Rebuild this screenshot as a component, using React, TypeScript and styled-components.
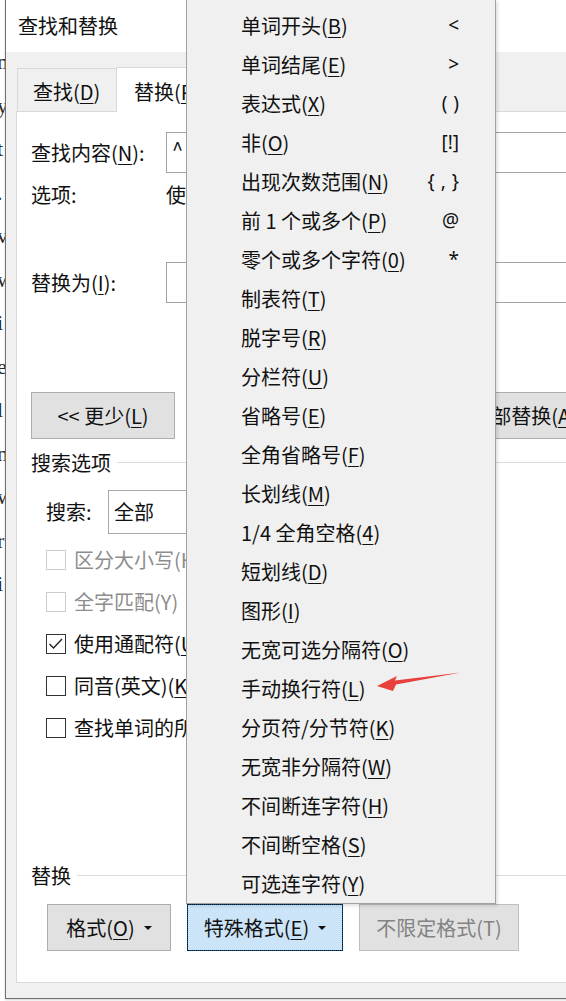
import styled, { createGlobalStyle } from 'styled-components';

const GlobalStyle = createGlobalStyle`
  * { box-sizing: border-box; }
  html, body { margin: 0; padding: 0; background: #fff; }
`

const Screen = styled.div`
  position: relative;
  width: 566px;
  height: 1001px;
  overflow: hidden;
  display: flex;
  background: #fff;
  font-family: "Noto Sans CJK SC", "Noto Sans", sans-serif;
  font-size: 20px;
  color: #111;
`

// 뒤에 깔린 문서 조각
const DocStrip = styled.div`
  width: 5px;
  flex-shrink: 0;
  overflow: hidden;
  padding-top: 40px;
  font-family: "Liberation Serif", serif;
  font-size: 22px;
  line-height: 43.5px;
  color: #2a2a2a;
  white-space: nowrap;
`

const DocLine = styled.div`
  margin-left: -3px;
`

const Dialog = styled.div`
  width: 930px;
  height: 999px;
  flex-shrink: 0;
  border-left: 1px solid #707070;
  border-bottom: 1px solid #707070;
  background: #f0f0f0;
  display: flex;
  flex-direction: column;
  box-shadow: 0 1px 2px rgba(0, 0, 0, 0.18);
`

const TitleBar = styled.div`
  height: 52px;
  flex-shrink: 0;
  background: #fff;
  padding-left: 12px;
  display: flex;
  align-items: center;
  line-height: 1;
`

const TabRow = styled.div`
  height: 59px;
  flex-shrink: 0;
  padding: 15px 0 0 11px;
  display: flex;
  align-items: flex-end;
  position: relative;
  z-index: 1;
`

const Tab = styled.div<{ $active?: boolean }>`
  height: ${p => (p.$active ? '45px' : '43px')};
  margin-bottom: ${p => (p.$active ? '-1px' : '0')};
  margin-left: ${p => (p.$active ? '-1px' : '0')};
  width: ${p => (p.$active ? '106px' : '100px')};
  padding: 4px 0 0 ${p => (p.$active ? '17px' : '15px')};
  display: flex;
  align-items: center;
  background: ${p => (p.$active ? '#fff' : '#f0f0f0')};
  border: 1px solid #d9d9d9;
  border-bottom: none;
  line-height: 1;
`

const Panel = styled.div`
  flex: 1;
  margin: 0 10px 15px 10px;
  background: #fff;
  border: 1px solid #d9d9d9;
  display: flex;
  flex-direction: column;
  padding-left: 14px;
  line-height: 1;
`

const FieldRow = styled.div<{ $mt: number; $h: number }>`
  margin-top: ${p => p.$mt}px;
  height: ${p => p.$h}px;
  display: grid;
  grid-template-columns: 135px 1fr;
  align-items: center;
  padding-right: 20px;
`

const TextBox = styled.div`
  height: 41px;
  border: 1px solid #a3a3a3;
  padding: 6px 5px 0;
`

const Mn = styled.span`
  text-decoration: underline;
  text-underline-offset: 3px;
  text-decoration-thickness: 1px;
`

const ButtonRow = styled.div<{ $mt: number; $pl: number; $gap: number }>`
  margin-top: ${p => p.$mt}px;
  padding-left: ${p => p.$pl}px;
  height: 47px;
  display: flex;
  gap: ${p => p.$gap}px;
`

const ActionGroup = styled.div`
  margin-left: 119px;
  display: flex;
  gap: 14px;
`

const Button = styled.div<{ $w: number; $focus?: boolean; $disabled?: boolean }>`
  width: ${p => p.$w}px;
  height: 47px;
  flex-shrink: 0;
  display: flex;
  align-items: center;
  justify-content: center;
  gap: 9px;
  white-space: nowrap;
  background: ${p => (p.$focus ? '#cce4f7' : '#e1e1e1')};
  border: 1px solid ${p => (p.$focus ? '#005499' : p.$disabled ? '#bfbfbf' : '#adadad')};
  outline: ${p => (p.$focus ? '1px dotted #111' : 'none')};
  outline-offset: -1px;
  color: ${p => (p.$disabled ? '#838383' : '#111')};
`

const Caret = styled.span`
  width: 0;
  height: 0;
  border-left: 4px solid transparent;
  border-right: 4px solid transparent;
  border-top: 4px solid #111;
`

const GroupHeader = styled.div<{ $mt: number }>`
  margin-top: ${p => p.$mt}px;
  height: 28px;
  display: flex;
  align-items: center;
  gap: 6px;
  &::after {
    content: '';
    flex: 1;
    height: 1px;
    margin-top: -1px;
    background: #dcdcdc;
  }
`

const SearchRow = styled.div`
  margin-top: 13px;
  height: 44px;
  padding-left: 15px;
  display: flex;
  align-items: center;
`

const SearchLabel = styled.span`
  width: 62px;
`

const Select = styled.div`
  width: 180px;
  height: 44px;
  border: 1px solid #a9a9a9;
  padding-left: 5px;
  display: flex;
  align-items: center;
`

const CheckList = styled.div`
  margin-top: 5px;
  padding-left: 15px;
  display: flex;
  flex-direction: column;
`

const CheckRow = styled.div<{ $disabled?: boolean }>`
  height: 42px;
  display: flex;
  align-items: center;
  gap: 8px;
  white-space: nowrap;
  color: ${p => (p.$disabled ? '#8d8d8d' : '#111')};
`

const Box = styled.span<{ $disabled?: boolean }>`
  width: 20px;
  height: 20px;
  flex-shrink: 0;
  border: 1px solid ${p => (p.$disabled ? '#cccccc' : '#333')};
  background: #fff;
  display: flex;
`

const Menu = styled.div`
  position: absolute;
  left: 186px;
  top: -1px;
  width: 310px;
  padding-top: 6px;
  background: #f0f0f0;
  border: 1px solid #a0a0a0;
  box-shadow: 2px 2px 3px rgba(0, 0, 0, 0.12);
  z-index: 5;
  line-height: 1;
`

const MenuItem = styled.div`
  height: 39px;
  padding: 0 36px 0 54px;
  display: flex;
  align-items: center;
  justify-content: space-between;
  white-space: nowrap;
`

const Shortcut = styled.span`
  font-family: "Noto Sans", sans-serif;
  font-size: 19px;
  word-spacing: 1px;
`

const Arrow = styled.svg`
  position: absolute;
  left: 370px;
  top: 665px;
  z-index: 6;
`

const docLetters = ['m', 'y', 't', '.', 'v', 'w', 'i', 'e', 'l', 'n', 'w', 'r', 'i']

const menuItems: [string, string, string, string][] = [
  ['单词开头(', 'B', ')', '<'],
  ['单词结尾(', 'E', ')', '>'],
  ['表达式(', 'X', ')', '( )'],
  ['非(', 'O', ')', '[!]'],
  ['出现次数范围(', 'N', ')', '{ , }'],
  ['前 1 个或多个(', 'P', ')', '@'],
  ['零个或多个字符(', '0', ')', '*'],
  ['制表符(', 'T', ')', ''],
  ['脱字号(', 'R', ')', ''],
  ['分栏符(', 'U', ')', ''],
  ['省略号(', 'E', ')', ''],
  ['全角省略号(', 'F', ')', ''],
  ['长划线(', 'M', ')', ''],
  ['1/4 全角空格(', '4', ')', ''],
  ['短划线(', 'D', ')', ''],
  ['图形(', 'I', ')', ''],
  ['无宽可选分隔符(', 'O', ')', ''],
  ['手动换行符(', 'L', ')', ''],
  ['分页符/分节符(', 'K', ')', ''],
  ['无宽非分隔符(', 'W', ')', ''],
  ['不间断连字符(', 'H', ')', ''],
  ['不间断空格(', 'S', ')', ''],
  ['可选连字符(', 'Y', ')', ''],
]

function Check({ label, disabled, checked }: { label: React.ReactNode; disabled?: boolean; checked?: boolean }) {
  return (
    <CheckRow $disabled={disabled}>
      <Box $disabled={disabled}>
        {checked && (
          <svg width="18" height="18" viewBox="0 0 18 18">
            <polyline points="2.5,9 6.5,13 15,4" fill="none" stroke="#222" strokeWidth="1.4" />
          </svg>
        )}
      </Box>
      <span>{label}</span>
    </CheckRow>
  )
}

export default function App() {
  return (
    <>
      <GlobalStyle />
      <Screen>
        <DocStrip>
          {docLetters.map((l, i) => <DocLine key={i}>{l}</DocLine>)}
        </DocStrip>

        <Dialog>
          <TitleBar>查找和替换</TitleBar>

          <TabRow>
            <Tab><span>查找(<Mn>D</Mn>)</span></Tab>
            <Tab $active><span>替换(<Mn>P</Mn>)</span></Tab>
          </TabRow>

          <Panel>
            <FieldRow $mt={20} $h={41}>
              <span>查找内容(<Mn>N</Mn>):</span>
              <TextBox>^</TextBox>
            </FieldRow>
            <FieldRow $mt={8} $h={28}>
              <span>选项:</span>
              <span>使用通配符</span>
            </FieldRow>
            <FieldRow $mt={53} $h={41}>
              <span>替换为(<Mn>I</Mn>):</span>
              <TextBox />
            </FieldRow>

            <ButtonRow $mt={89} $pl={0} $gap={0}>
              <Button $w={144}><span>&lt;&lt; 更少(<Mn>L</Mn>)</span></Button>
              <ActionGroup>
                <Button $w={144}><span>替换(<Mn>R</Mn>)</span></Button>
                <Button $w={144}><span>全部替换(<Mn>A</Mn>)</span></Button>
                <Button $w={144}><span>查找下一处(<Mn>F</Mn>)</span></Button>
                <Button $w={144}><span>取消</span></Button>
              </ActionGroup>
            </ButtonRow>

            {/* 搜索选项 */}
            <GroupHeader $mt={10}>搜索选项</GroupHeader>
            <SearchRow>
              <SearchLabel>搜索:</SearchLabel>
              <Select>全部</Select>
            </SearchRow>
            <CheckList>
              <Check disabled label="区分大小写(H)" />
              <Check disabled label="全字匹配(Y)" />
              <Check checked label={<>使用通配符(<Mn>U</Mn>)</>} />
              <Check label={<>同音(英文)(<Mn>K</Mn>)</>} />
              <Check label={<>查找单词的所有形式(英文)(<Mn>W</Mn>)</>} />
            </CheckList>

            {/* 替换 */}
            <GroupHeader $mt={113}>替换</GroupHeader>
            <ButtonRow $mt={14} $pl={16} $gap={16}>
              <Button $w={124}><span>格式(<Mn>O</Mn>)</span><Caret /></Button>
              <Button $w={156} $focus><span>特殊格式(<Mn>E</Mn>)</span><Caret /></Button>
              <Button $w={160} $disabled><span>不限定格式(T)</span></Button>
            </ButtonRow>
          </Panel>
        </Dialog>

        <Menu>
          {menuItems.map(([pre, key, post, sc], i) => (
            <MenuItem key={i}>
              <span>{pre}<Mn>{key}</Mn>{post}</span>
              <Shortcut>{sc}</Shortcut>
            </MenuItem>
          ))}
        </Menu>

        <Arrow width="96" height="32" viewBox="0 0 96 32">
          <polygon points="7,21 27,11 25,15.5 91,7.5 26,19.5 23,26" fill="#e8403a" />
        </Arrow>
      </Screen>
    </>
  )
}
